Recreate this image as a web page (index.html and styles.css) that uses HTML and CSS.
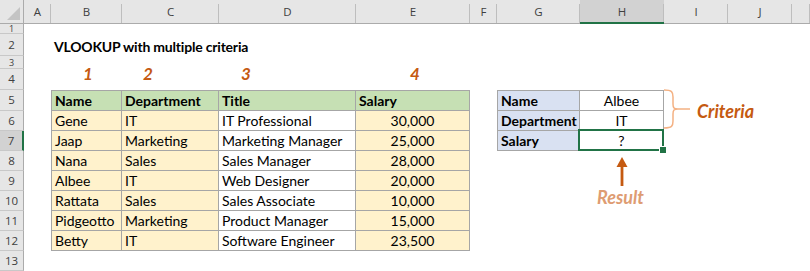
FILE: index.html
```html
<!DOCTYPE html>
<html lang="en">

<head>
    <meta charset="UTF-8">
    <meta name="viewport" content="width=device-width, initial-scale=1.0">
    <title>VLOOKUP with multiple criteria</title>
    <link rel="stylesheet" href="styles.css">
</head>

<body>

    <div class="sheet">
        <!-- column letters -->
        <div class="row head">
            <div class="corner"><span class="tri"></span></div>
            <div class="ch">A</div>
            <div class="ch">B</div>
            <div class="ch">C</div>
            <div class="ch">D</div>
            <div class="ch">E</div>
            <div class="ch">F</div>
            <div class="ch">G</div>
            <div class="ch sel">H</div>
            <div class="ch">I</div>
            <div class="ch">J</div>
            <div class="ch"></div>
        </div>

        <div class="row r1"><div class="rh">1</div></div>
        <div class="row r2">
            <div class="rh">2</div>
            <div class="cell col-b title">VLOOKUP with multiple criteria</div>
        </div>
        <div class="row r3"><div class="rh">3</div></div>
        <div class="row r4"><div class="rh">4</div></div>

        <div class="row r5">
            <div class="rh">5</div>
            <div class="cell col-b t hd left top">Name</div>
            <div class="cell t hd top">Department</div>
            <div class="cell t hd top">Title</div>
            <div class="cell t hd top">Salary</div>
            <div class="cell col-g t lbl left top">Name</div>
            <div class="cell t val top">Albee</div>
        </div>
        <div class="row">
            <div class="rh">6</div>
            <div class="cell col-b t y left">Gene</div>
            <div class="cell t y">IT</div>
            <div class="cell t">IT Professional</div>
            <div class="cell t y num">30,000</div>
            <div class="cell col-g t lbl left">Department</div>
            <div class="cell t val">IT</div>
        </div>
        <div class="row">
            <div class="rh sel">7</div>
            <div class="cell col-b t y left">Jaap</div>
            <div class="cell t y">Marketing</div>
            <div class="cell t">Marketing Manager</div>
            <div class="cell t y num">25,000</div>
            <div class="cell col-g t lbl left">Salary</div>
            <div class="cell t val active">?</div>
        </div>
        <div class="row">
            <div class="rh">8</div>
            <div class="cell col-b t y left">Nana</div>
            <div class="cell t y">Sales</div>
            <div class="cell t">Sales Manager</div>
            <div class="cell t y num">28,000</div>
        </div>
        <div class="row">
            <div class="rh">9</div>
            <div class="cell col-b t y left">Albee</div>
            <div class="cell t y">IT</div>
            <div class="cell t">Web Designer</div>
            <div class="cell t y num">20,000</div>
        </div>
        <div class="row">
            <div class="rh">10</div>
            <div class="cell col-b t y left">Rattata</div>
            <div class="cell t y">Sales</div>
            <div class="cell t">Sales Associate</div>
            <div class="cell t y num">10,000</div>
        </div>
        <div class="row">
            <div class="rh">11</div>
            <div class="cell col-b t y left">Pidgeotto</div>
            <div class="cell t y">Marketing</div>
            <div class="cell t">Product Manager</div>
            <div class="cell t y num">15,000</div>
        </div>
        <div class="row">
            <div class="rh">12</div>
            <div class="cell col-b t y left">Betty</div>
            <div class="cell t y">IT</div>
            <div class="cell t">Software Engineer</div>
            <div class="cell t y num">23,500</div>
        </div>
        <div class="row">
            <div class="rh">13</div>
        </div>

        <!-- drawing layer: callouts floating over the cells -->
        <span class="mark m1">1</span>
        <span class="mark m2">2</span>
        <span class="mark m3">3</span>
        <span class="mark m4">4</span>

        <svg class="brace" width="28" height="40" viewBox="0 0 28 40">
            <path d="M0,1 C8,1 9,3 9,8 L9,15 C9,19 10,20 14,20 L26,20 M14,20 C10,20 9,21 9,25 L9,32 C9,37 8,39 0,39" fill="none" stroke="#f4b183" stroke-width="1.5"/>
        </svg>
        <span class="note criteria">Criteria</span>

        <svg class="arrow" width="12" height="29" viewBox="0 0 12 29">
            <polygon points="6,0 11.5,10 0.5,10" fill="#c55a11"/>
            <rect x="4.6" y="9" width="2.8" height="20" fill="#c55a11"/>
        </svg>
        <span class="note result">Result</span>
    </div>

</body>

</html>
```

FILE: styles.css
```css
* {
    box-sizing: border-box;
    margin: 0;
    padding: 0;
}

body {
    font-family: Lato, "Liberation Sans", sans-serif;
    background-color: #fff;
    overflow: hidden;
}

.sheet {
    --cols: 24px 27px 71px 97px 137px 114px 27px 83px 84px 64px 64px 1fr;
    position: relative;
    width: 810px;
    height: 271px;
    overflow: hidden;
}

.row {
    display: grid;
    grid-template-columns: var(--cols);
    height: 20px;
}

.head { height: 24px; }
.r1 { height: 10px; }
.r2 { height: 22px; }
.r3 { height: 13px; }
.r4 { height: 21px; }
.r5 { height: 21px; }

/* headers */
.corner,
.ch {
    position: relative;
    background-color: #e6e6e6;
    border-bottom: 1px solid #ababab;
}

.corner {
    border-right: 1px solid #ababab;
}

.tri {
    position: absolute;
    right: 3px;
    bottom: 3px;
    border-style: solid;
    border-width: 0 0 13px 13px;
    border-color: transparent transparent #c4c4c4 transparent;
}

.ch {
    display: flex;
    justify-content: center;
    align-items: center;
    font-family: "Open Sans", "Noto Sans", sans-serif;
    font-size: 11.5px;
    color: #404040;
}

.ch::after {
    content: "";
    position: absolute;
    top: 4px;
    bottom: 0;
    right: 0;
    border-right: 1px solid #bebebe;
}

.ch.sel {
    background-color: #d2d2d2;
    border-bottom: 2px solid #217346;
}

.rh {
    display: flex;
    justify-content: center;
    align-items: center;
    overflow: hidden;
    background-color: #e6e6e6;
    border-right: 1px solid #ababab;
    border-bottom: 1px solid #c8c8c8;
    font-family: "Open Sans", "Noto Sans", sans-serif;
    font-size: 11.5px;
    line-height: 1;
    color: #404040;
}

/* the short rows only have room for a squeezed label */
.r1 .rh,
.r3 .rh {
    font-size: 9px;
    line-height: 9px;
    overflow: visible;
}

.rh.sel {
    background-color: #d2d2d2;
    border-right: 2px solid #217346;
}

/* cells */
.cell {
    display: flex;
    align-items: flex-end;
    padding: 0 3px 1px;
    font-size: 14px;
    line-height: 16px;
    color: #000;
    white-space: nowrap;
}

.col-b { grid-column-start: 3; }
.col-g { grid-column-start: 8; }

.title {
    grid-column-end: span 4;
    font-weight: bold;
    letter-spacing: -0.2px;
}

.t {
    border-right: 1px solid #a6a6a6;
    border-bottom: 1px solid #a6a6a6;
    overflow: hidden;
}

.t.left { border-left: 1px solid #a6a6a6; }
.t.top { border-top: 1px solid #a6a6a6; }

.hd {
    background-color: #c6e0b4;
    font-weight: bold;
}

.y { background-color: #fff2cc; }

.num,
.val {
    justify-content: center;
}

.lbl {
    background-color: #d9e1f2;
    font-weight: bold;
}

.active {
    position: relative;
    overflow: visible;
}

.active::after {
    content: "";
    position: absolute;
    top: -2px;
    left: -2px;
    right: -1px;
    bottom: -1px;
    border: 2px solid #217346;
}

.active::before {
    content: "";
    position: absolute;
    right: -4px;
    bottom: -4px;
    width: 6px;
    height: 6px;
    background-color: #217346;
    border: 1px solid #fff;
    z-index: 1;
}

/* callouts */
.mark,
.note {
    position: absolute;
    font-size: 17px;
    line-height: 1;
    font-weight: bold;
    font-style: italic;
    color: #c55a11;
}

.mark { top: 65px; }
.m1 { left: 83px; }
.m2 { left: 143px; }
.m3 { left: 241px; }
.m4 { left: 410px; }

.brace {
    position: absolute;
    left: 664px;
    top: 89px;
}

.note { font-size: 18px; }

.criteria {
    left: 697px;
    top: 102px;
}

.arrow {
    position: absolute;
    left: 616px;
    top: 157px;
}

.result {
    left: 597px;
    top: 188px;
    color: #de9c72;
}
```
